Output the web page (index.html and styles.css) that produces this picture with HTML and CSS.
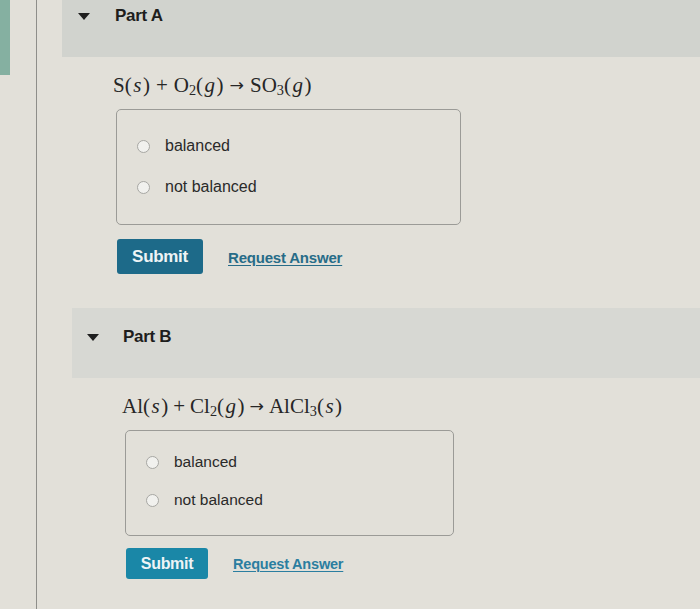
FILE: index.html
```html
<!DOCTYPE html>
<html lang="en">
<head>
  <meta charset="UTF-8">
  <meta name="viewport" content="width=device-width, initial-scale=1.0">
  <title>Balancing Equations</title>
  <link rel="stylesheet" href="styles.css">
</head>
<body>
  <div class="page">
    <div class="rail">
      <div class="rail-tab"></div>
    </div>

    <main class="content">
      <section class="part part-a">
        <div class="part-head">
          <span class="caret"></span>
          <h2>Part A</h2>
        </div>
        <div class="part-body">
          <p class="equation">S(<i>s</i>)<span class="op">+</span>O<sub>2</sub>(<i>g</i>)<span class="op arrow">&rarr;</span>SO<sub>3</sub>(<i>g</i>)</p>
          <form class="choices">
            <label class="choice"><input type="radio" name="partA" value="balanced"> balanced</label>
            <label class="choice"><input type="radio" name="partA" value="not-balanced"> not balanced</label>
          </form>
          <div class="actions">
            <button class="btn-submit" type="button">Submit</button>
            <a class="request" href="#">Request Answer</a>
          </div>
        </div>
      </section>

      <section class="part part-b">
        <div class="part-head">
          <span class="caret"></span>
          <h2>Part B</h2>
        </div>
        <div class="part-body">
          <p class="equation">Al(<i>s</i>)<span class="op">+</span>Cl<sub>2</sub>(<i>g</i>)<span class="op arrow">&rarr;</span>AlCl<sub>3</sub>(<i>s</i>)</p>
          <form class="choices">
            <label class="choice"><input type="radio" name="partB" value="balanced"> balanced</label>
            <label class="choice"><input type="radio" name="partB" value="not-balanced"> not balanced</label>
          </form>
          <div class="actions">
            <button class="btn-submit" type="button">Submit</button>
            <a class="request" href="#">Request Answer</a>
          </div>
        </div>
      </section>
    </main>
  </div>
</body>
</html>
```

FILE: styles.css
```css
:root {
  --page: #e2e0d9; --band: #d1d3ce; --band-light: #d7d8d3;
  --text: #2c2c2b; --rule: #8e8e8a; --border: #9b9b97;
  --teal: #1d6a89; --teal-light: #1a87a7; --link: #276c88;
}

* { box-sizing: border-box; }

body {
  margin: 0; height: 609px; overflow: hidden;
  background: var(--page); color: var(--text);
  font-family: "Liberation Sans", Arial, Helvetica, sans-serif;
}

.page { display: flex; min-height: 609px; }

/* left navigation rail with the active tab marker */
.rail { width: 37px; flex: none; border-right: 1px solid var(--rule); }
.rail-tab { width: 10px; height: 75px; background: #85b0a1; }

.content { flex: 1; min-width: 0; }

.part-head {
  height: 70px; padding: 19px 0 0 16px;
  display: flex; align-items: flex-start; gap: 25px;
  background: var(--band);
}
.part-head h2 {
  margin: 0; font-size: 17px; line-height: 20px; font-weight: 700;
  letter-spacing: -0.3px; color: #1e1e1d;
}
.caret {
  width: 0; height: 0; margin-top: 7px;
  border-left: 6px solid transparent; border-right: 6px solid transparent;
  border-top: 7px solid #1f1f1f;
}

.part-body { padding-left: 51px; }

.equation {
  margin: 16px 0 12px; font-family: "Liberation Serif", "Times New Roman", serif;
  font-size: 21px; line-height: 24px; color: #262626;
}
.equation i { font-style: italic; padding: 0 1.5px; }
.equation sub { font-size: 0.68em; line-height: 0; vertical-align: -0.22em; }
.op { margin: 0 6px; }
.arrow { font-family: "DejaVu Sans", sans-serif; font-size: 0.82em; line-height: 0; vertical-align: 0.06em; }

.choices {
  margin-left: 3px; border: 1px solid var(--border); border-radius: 5px;
  display: flex; flex-direction: column; gap: 19px;
  padding: 25px 0 26px 20px;
}
.choice {
  display: flex; align-items: center; gap: 15px;
  height: 22px; font-size: 16px; color: #2a2a29;
}
.choice input {
  appearance: none; margin: 0; width: 13px; height: 13px;
  border: 1px solid #a7a7a3; border-radius: 50%; background: #f1f1ee;
}

.actions { display: flex; align-items: center; gap: 25px; margin: 14px 0 0 4px; }
.btn-submit {
  width: 86px; height: 35px; border: none; border-radius: 3px;
  background: var(--teal); color: #eef4f6;
  font: 700 17px/1 "Liberation Sans", Arial, sans-serif; letter-spacing: -0.3px;
}
.request {
  color: var(--link); font-size: 15px; font-weight: 700;
  text-decoration: underline; text-underline-offset: 2px; letter-spacing: -0.2px;
  margin-top: 1px;
}

.part-a { margin: -13px 0 0 25px; }
.part-a .choices { width: 345px; }

/* the second part sits slightly further in and renders a bit tighter */
.part-b { margin: 34px 0 0 35px; }
.part-b .part-head { padding-left: 15px; gap: 24px; background: var(--band-light); }
.part-b .part-body { padding-left: 50px; }
.part-b .equation { margin-bottom: 12px; }
.part-b .op { margin: 0 5px; }
.part-b .choices { width: 329px; gap: 16px; padding: 20px 0 24px 20px; }
.part-b .choice { font-size: 15.5px; }
.part-b .actions { margin-top: 12px; }
.part-b .btn-submit { width: 82px; height: 31px; font-size: 16px; background: var(--teal-light); }
.part-b .request { font-size: 14.5px; color: #2b7ea0; }
```
